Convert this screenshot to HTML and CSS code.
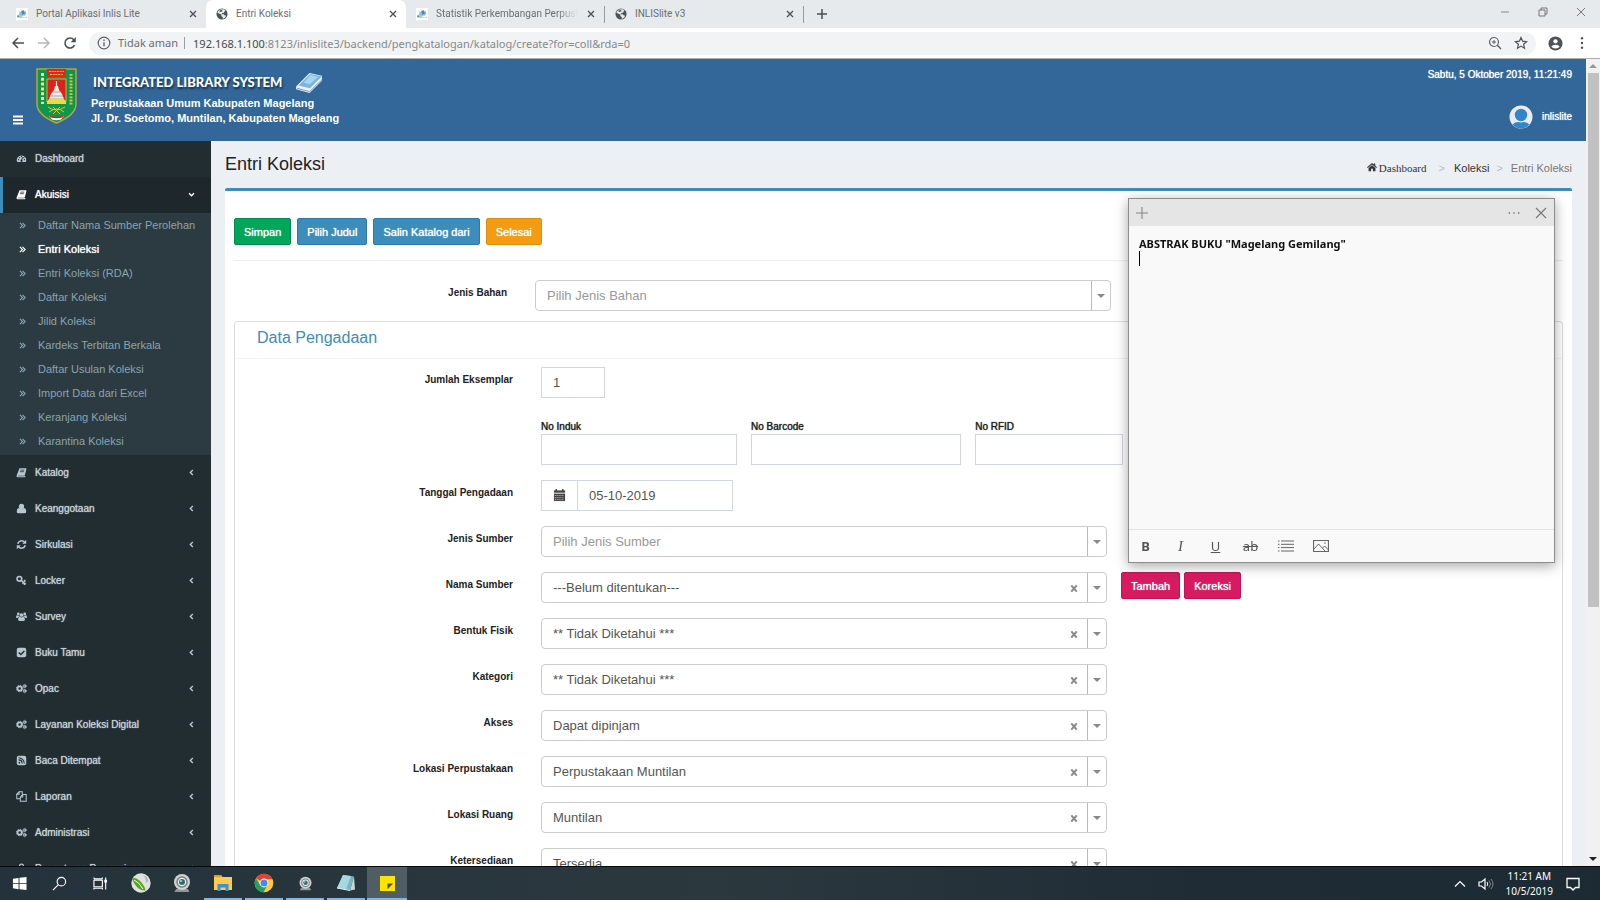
FILE: index.html
```html
<!DOCTYPE html>
<html lang="id">
<head>
<meta charset="utf-8">
<title>Entri Koleksi</title>
<link rel="stylesheet" href="styles.css">
</head>
<body>
<svg class="defs" aria-hidden="true">
  <symbol id="globe" viewBox="0 0 14 14"><circle cx="7" cy="7" r="6.500" fill="#4d5257"/><path d="M7.200 1.500c1.600 0 3 .6 3.900 1.600l-1.300.9-.3 1.500-2.200.4-.6 1.500h2.300l1 1.200 1.700.3c-.5 1.900-2 3.300-4 3.700l.3-1.700-1.800-1.500.2-1.800-2.300-.9L1.600 5.500C2.200 3.200 4.400 1.500 7.200 1.500z" fill="#e8ebed"/><path d="M4 2.800l2.500-.6 1.300 1.100-1.900 1.500-1.700-.3z" fill="#4d5257"/></symbol>
  <symbol id="portal" viewBox="0 0 14 14"><path fill="#fff" d="M0 0h14v14H0z"/><path d="M3 7l1 2h6l2-2-1-4-2 2-1-2-2 2-2-1v3z" fill="#8dbbdc"/><path d="M6 3.500l3-1 1.500 3.500-3 2z" fill="#4d86c0"/><path d="M2 10q3-2 5.500 0t5.500 0v1.500H2z" fill="#9cc9dd"/><path d="M1.500 8.500h2v2h-2z" fill="#6d8b5c"/></symbol>
  <symbol id="cross" viewBox="0 0 10 10"><path d="M2 2l6 6M8 2L2 8" stroke="currentColor" stroke-width="1.300" fill="none"/></symbol>
  <symbol id="wipe" viewBox="0 0 10 10"><path d="M2 1.500l6 7M8 1.500l-6 7" stroke="currentColor" stroke-width="2.200" fill="none"/></symbol>
  <symbol id="gauge" viewBox="0 0 14 14"><path d="M1.500 11.500A6 6 0 1 1 12.500 11.500z" fill="currentColor"/><path d="M7 10l1.300-4.500" stroke="#222d32" stroke-width="1.200"/><circle cx="7" cy="10" r="1.400" fill="#222d32"/><g fill="#222d32"><circle cx="3.300" cy="8.500" r=".8"/><circle cx="4.300" cy="5.800" r=".8"/><circle cx="7" cy="4.400" r=".8"/><circle cx="10.700" cy="8.500" r=".8"/><circle cx="10" cy="5.800" r=".8"/></g></symbol>
  <symbol id="book" viewBox="0 0 14 14"><path d="M4.500 1.500h8q1 .2.800 1.200l-2 7.500q-.2.800-1 .8H3q-1 .2-.5.900h8.300l.4-.4h1q-.3 1.500-1.400 1.500H2.300Q.4 12.900.7 11z" fill="currentColor"/><path d="M5.600 4h5M5 6h5" stroke="#222d32" stroke-width="1"/></symbol>
  <symbol id="user" viewBox="0 0 14 14"><circle cx="7" cy="4.300" r="3.300" fill="currentColor"/><path d="M1 11q0-4.500 3-4.700 3 2 6 0 3 .2 3 4.700 0 2-2 2H3q-2 0-2-2z" fill="currentColor"/></symbol>
  <symbol id="refresh" viewBox="0 0 14 14"><path d="M2.200 6A5 5 0 0 1 10.800 4M11.800 8A5 5 0 0 1 3.200 10" fill="none" stroke="currentColor" stroke-width="2"/><path d="M13 1v5H8zM1 13V8h5z" fill="currentColor"/></symbol>
  <symbol id="key" viewBox="0 0 14 14"><circle cx="4.300" cy="4.800" r="3" fill="none" stroke="currentColor" stroke-width="2"/><path d="M6.500 6.800l6 5M9.500 9.500L8.200 11M11.500 11l-1.300 1.600" stroke="currentColor" stroke-width="1.900"/><circle cx="11" cy="7.500" r="1.300" fill="currentColor"/></symbol>
  <symbol id="group" viewBox="0 0 16 14"><g fill="currentColor"><circle cx="3.300" cy="3.300" r="2"/><circle cx="12.700" cy="3.300" r="2"/><circle cx="8" cy="4.800" r="2.700"/><path d="M0 8q0-2.800 1.500-2.800 1.800 1 3.200.3Q5 7 5.700 7.400H4L2.500 9Q0 9.500 0 8zM16 8q0-2.800-1.500-2.800-1.800 1-3.200.3-.3 1.500-1 1.900H12L13.500 9Q16 9.500 16 8z"/><path d="M3 11.500Q3 7.500 5.500 7.500q2.500 1.500 5 0Q13 7.500 13 11.500q0 2-2 2H5q-2 0-2-2z"/></g></symbol>
  <symbol id="check" viewBox="0 0 14 14"><rect x="1" y="1" width="12" height="12" rx="2.500" fill="currentColor"/><path d="M3.500 7l2.700 2.600L10.700 5" stroke="#222d32" stroke-width="1.900" fill="none"/></symbol>
  <symbol id="gears" viewBox="0 0 16 14"><circle cx="5.300" cy="7" r="3.200" fill="none" stroke="currentColor" stroke-width="2.600"/><circle cx="5.300" cy="7" r="4.700" fill="none" stroke="currentColor" stroke-width="1.300" stroke-dasharray="1.900 1.790"/><g fill="none" stroke="currentColor"><circle cx="12.700" cy="3.400" r="1.600" stroke-width="1.500"/><circle cx="12.700" cy="10.600" r="1.600" stroke-width="1.500"/><circle cx="12.700" cy="3.400" r="2.600" stroke-dasharray="1.300 1.400"/><circle cx="12.700" cy="10.600" r="2.600" stroke-dasharray="1.300 1.400"/></g></symbol>
  <symbol id="rss" viewBox="0 0 14 14"><rect x="1" y="1" width="12" height="12" rx="2.500" fill="currentColor"/><circle cx="4.300" cy="9.800" r="1.100" fill="#222d32"/><path d="M3.300 6.200a4.500 4.500 0 0 1 4.500 4.500M3.300 3.500a7.200 7.200 0 0 1 7.200 7.200" stroke="#222d32" stroke-width="1.300" fill="none"/></symbol>
  <symbol id="copy" viewBox="0 0 14 14"><path d="M4 1h4v3.500M1 4l3-3v3zM1 4v6h4.500M8.500 4.500H13V13H5.500V7.500zM8.500 4.500v3h-3" fill="none" stroke="currentColor" stroke-width="1.300"/></symbol>
  <symbol id="lock" viewBox="0 0 14 14"><path d="M4.500 7V4a2.500 2.500 0 0 1 5 0v3" fill="none" stroke="currentColor" stroke-width="1.600"/><rect x="2.500" y="6.500" width="9" height="6.500" rx="1" fill="currentColor"/></symbol>
  <symbol id="raquo" viewBox="0 0 8 8"><path d="M1 1l3 3-3 3M4 1l3 3-3 3" fill="none" stroke="currentColor" stroke-width="1.300"/></symbol>
  <symbol id="left" viewBox="0 0 8 8"><path d="M5.500 1.200L2.700 4l2.800 2.800" fill="none" stroke="currentColor" stroke-width="1.600"/></symbol>
  <symbol id="down" viewBox="0 0 8 8"><path d="M1.200 2.500L4 5.300l2.800-2.800" fill="none" stroke="currentColor" stroke-width="1.600"/></symbol>
  <symbol id="cam" viewBox="0 0 18 20"><path d="M3 16h12l1.500 3h-15z" fill="#8f9697"/><circle cx="9" cy="9" r="8" fill="#cfd3d3"/><circle cx="9" cy="9" r="5" fill="#f0f1f1" stroke="#777e7f" stroke-width="1.500"/><circle cx="9" cy="9" r="3" fill="#2d6d70"/><circle cx="8" cy="8" r="1" fill="#b8dcdc"/></symbol>
</svg>

<header class="chrome">
  <div class="tabstrip">
    <div class="tab"><svg class="fav"><use href="#portal"/></svg><span class="tab-name">Portal Aplikasi Inlis Lite</span><button class="tab-close" aria-label="Tutup tab"><svg><use href="#cross"/></svg></button></div>
    <div class="tab active"><svg class="fav"><use href="#globe"/></svg><span class="tab-name">Entri Koleksi</span><button class="tab-close" aria-label="Tutup tab"><svg><use href="#cross"/></svg></button></div>
    <div class="tab divided"><svg class="fav"><use href="#portal"/></svg><span class="tab-name fade">Statistik Perkembangan Perpustakaan</span><button class="tab-close" aria-label="Tutup tab"><svg><use href="#cross"/></svg></button></div>
    <div class="tab divided"><svg class="fav"><use href="#globe"/></svg><span class="tab-name">INLISlite v3</span><button class="tab-close" aria-label="Tutup tab"><svg><use href="#cross"/></svg></button></div>
    <button class="new-tab" aria-label="Tab baru"><svg viewBox="0 0 12 12"><path d="M6 1v10M1 6h10" stroke="#4a4e52" stroke-width="1.500"/></svg></button>
    <div class="window-buttons">
      <button aria-label="Minimalkan"><svg viewBox="0 0 10 10"><path d="M1 5h8" stroke="#888"/></svg></button>
      <button aria-label="Pulihkan"><svg viewBox="0 0 10 10"><path d="M1 3h6v6H1zM3 3V1h6v6H7" fill="none" stroke="#777"/></svg></button>
      <button aria-label="Tutup"><svg viewBox="0 0 10 10"><path d="M1 1l8 8M9 1L1 9" stroke="#777"/></svg></button>
    </div>
  </div>
  <div class="toolbar">
    <button aria-label="Kembali"><svg viewBox="0 0 14 14"><path d="M13 7H2M7 2L2 7l5 5" fill="none" stroke="#4a4e52" stroke-width="1.500"/></svg></button>
    <button aria-label="Maju"><svg viewBox="0 0 14 14"><path d="M1 7h11M7 2l5 5-5 5" fill="none" stroke="#b5b8bb" stroke-width="1.500"/></svg></button>
    <button aria-label="Muat ulang"><svg viewBox="0 0 14 14"><path d="M11.500 9.200A5 5 0 1 1 10.700 3.700" fill="none" stroke="#4a4e52" stroke-width="1.600"/><path d="M12.800 1v5.200H7.600z" fill="#4a4e52"/></svg></button>
    <div class="omnibox">
      <svg class="info" viewBox="0 0 14 14"><circle cx="7" cy="7" r="5.800" fill="none" stroke="#5f6368" stroke-width="1.200"/><path d="M7 6.200v4M7 3.600v1.500" stroke="#5f6368" stroke-width="1.400"/></svg>
      <span class="insecure">Tidak aman</span>
      <span class="url"><span class="host">192.168.1.100</span>:8123/inlislite3/backend/pengkatalogan/katalog/create?for=coll&amp;rda=0</span>
      <button aria-label="Perbesar"><svg viewBox="0 0 14 14"><circle cx="6" cy="6" r="4.500" fill="none" stroke="#5f6368" stroke-width="1.200"/><path d="M9.300 9.300L13 13" stroke="#5f6368" stroke-width="1.500"/><path d="M6 4v4M4 6h4" stroke="#5f6368"/></svg></button>
      <button aria-label="Tandai"><svg viewBox="0 0 14 14"><path d="M7 1.500l1.600 3.700 4 .4-3 2.700.9 3.900L7 10.100l-3.500 2.100.9-3.900-3-2.700 4-.4z" fill="none" stroke="#4f5358" stroke-width="1.200"/></svg></button>
    </div>
    <button aria-label="Profil"><svg viewBox="0 0 16 16"><circle cx="8" cy="8" r="7.500" fill="#4f5358"/><circle cx="8" cy="5.700" r="2.300" fill="#fff"/><path d="M3.500 11.500Q4.500 9.300 8 9.300t4.500 2.200Q11 13.300 8 13.300t-4.500-1.800z" fill="#fff"/></svg></button>
    <button aria-label="Menu"><svg viewBox="0 0 14 14"><g fill="#4f5358"><circle cx="7" cy="2.300" r="1.200"/><circle cx="7" cy="7" r="1.200"/><circle cx="7" cy="11.700" r="1.200"/></g></svg></button>
  </div>
</header>

<div class="viewport">
  <div class="page">
    <header class="masthead">
      <button class="burger" aria-label="Menu samping"><svg viewBox="0 0 10 10"><path d="M0 1.500h10M0 5h10M0 8.500h10" stroke="#fff" stroke-width="2"/></svg></button>
      <svg class="crest" viewBox="0 0 41 56"><path d="M1 1h39v35Q40 47 20.500 55 1 47 1 36z" fill="#12944b" stroke="#b8a53a" stroke-width="1.500"/><path d="M11 1h19v8H11z" fill="#e1251f"/><path d="M13 3.500h15M14 6.500h13" stroke="#f1c22e" stroke-dasharray="2 .7"/><path d="M11 11h19v23H11z" fill="#df211d" stroke="#c9b32e"/><path d="M20.500 13v5" stroke="#ecebe4" stroke-width="1.200"/><path d="M19 18h3l1 4 3 4 2 5 1 2H12l1-2 2-5 3-4z" fill="#ecebe4"/><path d="M14 28h13M13 31h15M17 24h7" stroke="#8c8c84" stroke-width=".7"/><path d="M11 33q9.500-4 19 0v3H11z" fill="#f2dc2b"/><path d="M6.500 5v31" stroke="#f3ec83" stroke-width="3" stroke-dasharray="3 1.800"/><path d="M35 6v31" stroke="#d0c93b" stroke-width="3" stroke-dasharray="1.800 1.400"/><path d="M12 39q8 6 17 0M13 44q8-6 15 0M17 39l7 7M24 39l-7 7" fill="none" stroke="#cfca36" stroke-width="1"/><path d="M13 48q7.500 2.500 15 0l-3 3.500q-4.500 1.500-9 0z" fill="#fff"/><path d="M14 48.500q7 2 13 0" fill="none" stroke="#d4231f" stroke-width="1.500"/></svg>
      <div class="brand">
        <div class="brand-line"><span class="brand-name">INTEGRATED LIBRARY SYSTEM</span><svg class="brand-book" viewBox="0 0 30 24"><path d="M1 15L15 1l13 3v5L15 22 1 18z" fill="#e9f1f7"/><path d="M3.500 14L15.500 2 28 4.500 15.500 17z" fill="#78b5e1"/><path d="M9 11l7-8 8 2-9 8z" fill="#a5d5f2"/><path d="M2 17l13 3.500L28 8" fill="none" stroke="#8295a8"/></svg></div>
        <div class="brand-sub">Perpustakaan Umum Kabupaten Magelang</div>
        <div class="brand-sub">Jl. Dr. Soetomo, Muntilan, Kabupaten Magelang</div>
      </div>
      <div class="account">
        <time>Sabtu, 5 Oktober 2019, 11:21:49</time>
        <a class="user" href="#"><svg viewBox="0 0 24 24"><circle cx="12" cy="12" r="11.500" fill="#e9ebee"/><circle cx="12" cy="10" r="6.200" fill="#2f86c9"/><path d="M3.500 19.500Q7 16 12 17.500q5-1.500 8.500 2Q17 23.500 12 23.500t-8.500-4z" fill="#2f86c9"/></svg>inlislite</a>
      </div>
    </header>

    <div class="columns">
      <nav class="sidebar">
        <a class="item" href="#"><svg><use href="#gauge"/></svg><span>Dashboard</span></a>
        <a class="item open" href="#"><svg><use href="#book"/></svg><span>Akuisisi</span><svg class="chev"><use href="#down"/></svg></a>
        <div class="submenu">
          <a href="#"><svg><use href="#raquo"/></svg>Daftar Nama Sumber Perolehan</a>
          <a href="#" class="current"><svg><use href="#raquo"/></svg>Entri Koleksi</a>
          <a href="#"><svg><use href="#raquo"/></svg>Entri Koleksi (RDA)</a>
          <a href="#"><svg><use href="#raquo"/></svg>Daftar Koleksi</a>
          <a href="#"><svg><use href="#raquo"/></svg>Jilid Koleksi</a>
          <a href="#"><svg><use href="#raquo"/></svg>Kardeks Terbitan Berkala</a>
          <a href="#"><svg><use href="#raquo"/></svg>Daftar Usulan Koleksi</a>
          <a href="#"><svg><use href="#raquo"/></svg>Import Data dari Excel</a>
          <a href="#"><svg><use href="#raquo"/></svg>Keranjang Koleksi</a>
          <a href="#"><svg><use href="#raquo"/></svg>Karantina Koleksi</a>
        </div>
        <a class="item" href="#"><svg><use href="#book"/></svg><span>Katalog</span><svg class="chev"><use href="#left"/></svg></a>
        <a class="item" href="#"><svg><use href="#user"/></svg><span>Keanggotaan</span><svg class="chev"><use href="#left"/></svg></a>
        <a class="item" href="#"><svg><use href="#refresh"/></svg><span>Sirkulasi</span><svg class="chev"><use href="#left"/></svg></a>
        <a class="item" href="#"><svg><use href="#key"/></svg><span>Locker</span><svg class="chev"><use href="#left"/></svg></a>
        <a class="item" href="#"><svg><use href="#group"/></svg><span>Survey</span><svg class="chev"><use href="#left"/></svg></a>
        <a class="item" href="#"><svg><use href="#check"/></svg><span>Buku Tamu</span><svg class="chev"><use href="#left"/></svg></a>
        <a class="item" href="#"><svg><use href="#gears"/></svg><span>Opac</span><svg class="chev"><use href="#left"/></svg></a>
        <a class="item" href="#"><svg><use href="#gears"/></svg><span>Layanan Koleksi Digital</span><svg class="chev"><use href="#left"/></svg></a>
        <a class="item" href="#"><svg><use href="#rss"/></svg><span>Baca Ditempat</span><svg class="chev"><use href="#left"/></svg></a>
        <a class="item" href="#"><svg><use href="#copy"/></svg><span>Laporan</span><svg class="chev"><use href="#left"/></svg></a>
        <a class="item" href="#"><svg><use href="#gears"/></svg><span>Administrasi</span><svg class="chev"><use href="#left"/></svg></a>
        <a class="item" href="#"><svg><use href="#lock"/></svg><span>Pengaturan Pengunjung</span><svg class="chev"><use href="#left"/></svg></a>
      </nav>

      <main class="content">
        <div class="heading">
          <h1>Entri Koleksi</h1>
          <nav class="crumbs">
            <a class="home" href="#"><svg viewBox="0 0 14 14"><path d="M0 7.500L7 1.500l2.500 2.100V2h2v3.300L14 7.500l-1 1L7 3.500l-6 5zM2.200 8.500L7 4.600l4.800 3.900V13H8.300V9.500H5.700V13H2.200z" fill="currentColor"/></svg>Dashboard</a>
            <span class="sep">&gt;</span><a href="#">Koleksi</a><span class="sep">&gt;</span><span class="here">Entri Koleksi</span>
          </nav>
        </div>
        <form class="box">
          <div class="actions">
            <button type="button" class="btn green">Simpan</button>
            <button type="button" class="btn blue">Pilih Judul</button>
            <button type="button" class="btn blue">Salin Katalog dari</button>
            <button type="button" class="btn orange">Selesai</button>
          </div>
          <div class="material">
            <label for="bahan">Jenis Bahan</label>
            <div class="combo empty"><select id="bahan"><option>Pilih Jenis Bahan</option></select><span class="arrow"></span></div>
          </div>
          <section class="panel">
            <h2>Data Pengadaan</h2>
            <div class="rows">
              <div class="row"><label for="jumlah">Jumlah Eksemplar</label><input id="jumlah" class="count" type="text" value="1"></div>
              <div class="row numbers">
                <div class="trio">
                  <div class="stack"><label for="induk">No Induk</label><input id="induk" type="text"></div>
                  <div class="stack"><label for="barcode">No Barcode</label><input id="barcode" type="text"></div>
                  <div class="stack"><label for="rfid">No RFID</label><input id="rfid" type="text"></div>
                </div>
              </div>
              <div class="row"><label for="tanggal">Tanggal Pengadaan</label><div class="date"><svg viewBox="0 0 14 14"><path d="M1 1.500h12V13H1z" fill="#444"/><path d="M3.500 0v3M10.500 0v3" stroke="#444" stroke-width="1.600"/><path d="M1 4.500h12" stroke="#fff"/><path d="M2 7h10M2 9.300h10M2 11.500h10" stroke="#bbb" stroke-width="1" stroke-dasharray="1.200 .8"/></svg><input id="tanggal" type="text" value="05-10-2019"></div></div>
              <div class="row"><label for="jsumber">Jenis Sumber</label><div class="combo empty"><select id="jsumber"><option>Pilih Jenis Sumber</option></select><span class="arrow"></span></div></div>
              <div class="row"><label for="nsumber">Nama Sumber</label><div class="combo"><select id="nsumber"><option>---Belum ditentukan---</option></select><button type="button" class="clear" aria-label="Hapus"><svg><use href="#wipe"/></svg></button><span class="arrow"></span></div><div class="extra"><button type="button" class="btn pink">Tambah</button><button type="button" class="btn pink">Koreksi</button></div></div>
              <div class="row"><label for="bentuk">Bentuk Fisik</label><div class="combo"><select id="bentuk"><option>** Tidak Diketahui ***</option></select><button type="button" class="clear" aria-label="Hapus"><svg><use href="#wipe"/></svg></button><span class="arrow"></span></div></div>
              <div class="row"><label for="kategori">Kategori</label><div class="combo"><select id="kategori"><option>** Tidak Diketahui ***</option></select><button type="button" class="clear" aria-label="Hapus"><svg><use href="#wipe"/></svg></button><span class="arrow"></span></div></div>
              <div class="row"><label for="akses">Akses</label><div class="combo"><select id="akses"><option>Dapat dipinjam</option></select><button type="button" class="clear" aria-label="Hapus"><svg><use href="#wipe"/></svg></button><span class="arrow"></span></div></div>
              <div class="row"><label for="perpus">Lokasi Perpustakaan</label><div class="combo"><select id="perpus"><option>Perpustakaan Muntilan</option></select><button type="button" class="clear" aria-label="Hapus"><svg><use href="#wipe"/></svg></button><span class="arrow"></span></div></div>
              <div class="row"><label for="ruang">Lokasi Ruang</label><div class="combo"><select id="ruang"><option>Muntilan</option></select><button type="button" class="clear" aria-label="Hapus"><svg><use href="#wipe"/></svg></button><span class="arrow"></span></div></div>
              <div class="row"><label for="sedia">Ketersediaan</label><div class="combo"><select id="sedia"><option>Tersedia</option></select><button type="button" class="clear" aria-label="Hapus"><svg><use href="#wipe"/></svg></button><span class="arrow"></span></div></div>
            </div>
          </section>
        </form>
      </main>
    </div>
  </div>
  <div class="scrollbar" aria-hidden="true"><i class="up"></i><i class="thumb"></i><i class="dn"></i></div>
</div>

<aside class="note">
  <div class="note-head">
    <button aria-label="Catatan baru"><svg viewBox="0 0 14 14"><path d="M7 1v12M1 7h12" stroke="#888" stroke-width="1.100"/></svg></button>
    <button class="more" aria-label="Menu catatan"><svg viewBox="0 0 14 14"><g fill="#555"><circle cx="1.500" cy="7" r=".9"/><circle cx="7" cy="7" r=".9"/><circle cx="12.500" cy="7" r=".9"/></g></svg></button>
    <button aria-label="Tutup catatan"><svg viewBox="0 0 14 14"><path d="M2 2l10 10M12 2L2 12" stroke="#777" stroke-width="1.100"/></svg></button>
  </div>
  <div class="note-text"><p>ABSTRAK BUKU "Magelang Gemilang"</p><i class="caret"></i></div>
  <div class="note-tools">
    <button><b>B</b></button><button><i>I</i></button><button><u>U</u></button><button><s>ab</s></button>
    <button aria-label="Daftar"><svg viewBox="0 0 16 14"><path d="M3 2h13M3 5.300h13M3 8.600h13M3 12h13M0 2h1.500M0 5.300h1.500M0 8.600h1.500M0 12h1.500" stroke="#666"/></svg></button>
    <button aria-label="Gambar"><svg viewBox="0 0 16 14"><path d="M.5 1.500h15v11H.5z" fill="none" stroke="#666" stroke-width="1.200"/><path d="M1 10l4.500-5 7 7.500M9.500 9l2-2 4 4" fill="none" stroke="#666"/><circle cx="12" cy="4" r=".8" fill="#666"/></svg></button>
  </div>
</aside>

<footer class="taskbar">
  <button aria-label="Mulai"><svg viewBox="0 0 16 16"><path d="M1 3l6-1v5.600H1zM8 1.900L15.500 1v6.600H8zM1 8.500h6V14l-6-.9zM8 8.500h7.500V15L8 14.100z" fill="#fff"/></svg></button>
  <button aria-label="Cari"><svg viewBox="0 0 16 16"><circle cx="10" cy="6" r="4.500" fill="none" stroke="#fff" stroke-width="1.200"/><path d="M6.800 9.200L1 15" stroke="#fff" stroke-width="1.200"/></svg></button>
  <button aria-label="Tampilan tugas"><svg viewBox="0 0 16 16"><path d="M1 4.500h9v7H1zM1 3V1.500M10 3V1.500M1 3h9M1 14.500V13h9v1.500M13.500 1.500v13" fill="none" stroke="#fff" stroke-width="1.200"/><path d="M12 4h3v3h-3z" fill="#fff"/></svg></button>
  <button aria-label="CorelDRAW"><svg class="large" viewBox="0 0 20 20"><circle cx="10" cy="10" r="9.700" fill="#dfe2de"/><path d="M1 6Q4 3 9 8t5.500 9.500Q6 18 1 6z" fill="#58a31d"/><path d="M3 7q5 2 9 9" stroke="#fff" fill="none"/><path d="M12 2q4 1 5.500 6l-2.500 2q0-5-3-8z" fill="#b3b8b4"/></svg></button>
  <button aria-label="Kamera"><svg class="large"><use href="#cam"/></svg></button>
  <button class="running" aria-label="File Explorer"><svg class="large" viewBox="0 0 20 20"><path d="M1 2h7l1.500 2H19v13H1z" fill="#fccb4f"/><path d="M1 2h7l1 2H1z" fill="#e79b1a"/><path d="M4.500 18v-7h11v7h-3v-3.500h-5V18z" fill="#3b93d8"/></svg></button>
  <button class="running" aria-label="Chrome"><svg class="large" viewBox="0 0 20 20"><circle cx="10" cy="10" r="9.300" fill="#fccc3d"/><path d="M10 10L2 5.300A9.300 9.300 0 0 1 18.500 6.200H10z" fill="#df4437"/><path d="M10 10L6.300 12.300 2 5.300a9.300 9.300 0 0 0 7.600 14L13.500 12z" fill="#1ea362"/><circle cx="10" cy="10" r="4.400" fill="#fff"/><circle cx="10" cy="10" r="3.500" fill="#4588f1"/></svg></button>
  <button class="running" aria-label="Kamera"><svg><use href="#cam"/></svg></button>
  <button class="running" aria-label="Notepad"><svg class="large" viewBox="0 0 20 20"><path d="M7 2l11 1.500-4 14L1 15z" fill="#75b7c6"/><path d="M7 2l8 1-5 13.500L1 15z" fill="#a8d7de"/><path d="M18 3.500l1 13-5 1z" fill="#cfd5d4"/><path d="M1 15l13 2.500" stroke="#e4eeee"/></svg></button>
  <button class="running focused" aria-label="Sticky Notes"><svg viewBox="0 0 16 16"><path d="M0 0h16v16H0z" fill="#ffe400"/><path d="M8 8h6l-6 6z" fill="#4c5256"/></svg></button>
  <div class="tray">
    <svg viewBox="0 0 12 12"><path d="M1 8.500l5-5 5 5" fill="none" stroke="#fff" stroke-width="1.200"/></svg>
    <svg class="speaker" viewBox="0 0 16 14"><path d="M1 5h2.500L7 2v10L3.500 9H1z" fill="none" stroke="#fff" stroke-width="1.200"/><path d="M9 5q1.500 2 0 4" fill="none" stroke="#fff"/><path d="M11 3.500q3 3.500 0 7M13 2q4 5 0 10" fill="none" stroke="#7d888d"/></svg>
    <div class="clock"><span>11:21 AM</span><span>10/5/2019</span></div>
    <svg class="notify" viewBox="0 0 14 14"><path d="M1 1.500h12v9H9.500L7 13l-2.500-2.500H1z" fill="none" stroke="#fff" stroke-width="1.300"/></svg>
  </div>
</footer>
</body>
</html>
```
FILE: styles.css
```css
* { box-sizing: border-box; }
body { margin: 0; height: 100vh; display: flex; flex-direction: column; overflow: hidden; font-family: "Liberation Sans", Arial, sans-serif; font-size: 11px; color: #222; }
button { border: 0; padding: 0; background: none; font: inherit; color: inherit; display: flex; align-items: center; justify-content: center; }
a { color: inherit; text-decoration: none; }
svg { display: block; flex: none; }
.defs { display: none; }

/* Browser frame */
.chrome { flex: none; font-family: "Noto Sans", "Open Sans", sans-serif; font-size: 10px; color: #6a6e73; }
.tabstrip { height: 28px; display: flex; align-items: center; background: #e6eaed; padding-left: 6px; }
.tab { width: 200px; height: 28px; display: flex; align-items: center; padding: 0 8px 0 10px; gap: 8px; font-family: Roboto, sans-serif; }
.tab.active { background: #fff; border-radius: 7px 7px 0 0; }
.tab.divided { width: 199px; border-right: 1px solid #989b9e; height: 17px; }
.fav { width: 12px; height: 12px; }
.tab-name { flex: 1; overflow: hidden; white-space: nowrap; line-height: 16px; }
.fade { mask-image: linear-gradient(90deg, #000 85%, transparent); }
.tab-close svg { width: 10px; height: 10px; color: #4a4e52; }
.new-tab { margin-left: 12px; }
.new-tab svg { width: 12px; height: 12px; }
.window-buttons { margin-left: auto; display: flex; gap: 28px; padding: 0 14px 4px 0; }
.window-buttons svg { width: 10px; height: 10px; }
.toolbar { height: 31px; display: flex; align-items: center; background: #fff; border-bottom: 1px solid #a9adb0; padding: 0 11px; gap: 12px; }
.toolbar svg { width: 14px; height: 14px; }
.toolbar > button:nth-last-child(2) svg { width: 15px; height: 15px; }
.omnibox { flex: 1; height: 23px; display: flex; align-items: center; border-radius: 12px; background: #f1f3f4; padding: 0 8px; gap: 12px; font-size: 11px; }
.omnibox .info { margin-right: -5px; }
.insecure { border-right: 1px solid #9a9da0; padding-right: 6px; line-height: 12px; }
.url { flex: 1; margin-left: -4px; color: #85898d; }
.host { color: #45494d; }

/* Application */
.viewport { flex: 1; min-height: 0; display: flex; }
.page { flex: 1; min-width: 0; display: flex; flex-direction: column; overflow: hidden; }
.masthead { flex: none; height: 82px; display: flex; background: #336799; color: #fff; padding: 9px 14px 0 13px; }
.burger { align-self: flex-end; margin: 0 13px 16px 0; }
.burger svg { width: 10px; height: 10px; }
.crest { width: 41px; height: 56px; }
.brand { margin-left: 14px; padding-top: 2px; }
.brand-line { display: flex; align-items: center; gap: 13px; height: 26px; }
.brand-name { font: 900 13px Lato, sans-serif; text-shadow: 1px 2px 2px #14304d; padding: 0 0 2px 2px; }
.brand-book { width: 29px; height: 23px; }
.brand-sub { line-height: 15px; font-weight: bold; }
.account { margin-left: auto; display: flex; flex-direction: column; align-items: flex-end; justify-content: space-between; font-size: 10px; line-height: 14px; padding-bottom: 12px; text-shadow: 0 0 1px currentColor; }
.user { display: flex; align-items: center; gap: 9px; }
.user svg { width: 24px; height: 24px; }
.columns { flex: 1; min-height: 0; display: flex; background: #ecf0f5; }
.sidebar { flex: none; width: 211px; overflow: hidden; background: #222d32; color: #b8c7ce; }
.item { display: flex; align-items: center; height: 36px; padding: 0 16px 2px; gap: 8px; font-size: 10px; text-shadow: 0 0 1px currentColor; }
.item svg { width: 11px; height: 11px; }
.item span { flex: 1; color: #c6d2d8; }
.item .chev { width: 7px; height: 7px; }
.item.open { background: #1e282c; border-left: 3px solid #3c8dbc; padding-left: 13px; color: #fff; }
.item.open span { color: #fff; }
.submenu { background: #2c3b41; padding-bottom: 2px; color: #8aa4af; }
.submenu a { display: flex; align-items: center; gap: 12px; height: 24px; padding-left: 19px; }
.submenu svg { width: 7px; height: 7px; }
.submenu .current { color: #fff; text-shadow: 0 0 1px currentColor; }
.content { flex: 1; min-width: 0; display: flex; flex-direction: column; padding: 0 14px; }
.heading { flex: none; height: 47px; display: flex; justify-content: space-between; align-items: flex-start; padding-top: 12px; }
h1 { margin: 0; font-size: 18px; font-weight: normal; line-height: 22px; }
.crumbs { display: flex; align-items: center; line-height: 14px; padding-top: 8px; color: #333; }
.home { display: flex; gap: 2px; font-family: "Liberation Serif", serif; }
.home svg { width: 10px; height: 12px; }
.sep { color: #bbb; padding: 0 8px 0 7px; }
.home + .sep { padding: 0 9px 0 12px; }
.here { color: #777; }

/* Form */
.box { flex: 1; background: #fff; border-top: 3px solid #3c8dbc; border-radius: 2px 2px 0 0; padding: 27px 9px 0; }
.actions { display: flex; gap: 6px; padding-bottom: 15px; border-bottom: 1px solid #eee; }
.btn { height: 27px; padding: 0 9px; border: 1px solid; border-radius: 2px; color: #fff; text-shadow: 0 0 1px currentColor; }
.green { background: #00a65a; border-color: #008d4c; }
.blue { background: #3c8dbc; border-color: #2b7cab; }
.orange { background: #f39c12; border-color: #e08e0b; }
.pink { background: #d81b60; border-color: #cc1055; }
label { font-size: 10px; font-weight: bold; color: #222; }
.material { display: grid; grid-template-columns: 287fr 576fr 438fr; column-gap: 14px; padding: 19px 0 10px; }
.material label, .row > label { text-align: right; padding-right: 14px; line-height: 26px; }
.combo { height: 31px; display: flex; border: 1px solid #ccc; border-radius: 4px; background: #fff; overflow: hidden; }
.combo select { flex: 1; min-width: 0; appearance: none; border: 0; background: none; padding: 0 11px; font: 13px "Liberation Sans", Arial, sans-serif; color: #555; }
.combo.empty select { color: #999; }
.clear svg { width: 10px; height: 9px; color: #888; }
.clear { padding: 1px 8px 0 0; }
.arrow { width: 19px; border-left: 1px solid #bbb; display: flex; align-items: center; justify-content: center; }
.arrow::after { content: ""; border: 4px solid transparent; border-top-color: #888; border-bottom: 0; }
.panel { border: 1px solid #ddd; border-radius: 4px 4px 0 0; border-bottom: 0; }
h2 { margin: 0; padding: 0 22px; font-size: 16px; font-weight: normal; line-height: 32px; height: 37px; color: #3c8dbc; border-bottom: 1px solid #f4f4f4; }
.rows { display: flex; flex-direction: column; gap: 15px; padding-top: 8px; }
.row { display: grid; grid-template-columns: 292fr 566fr 441fr; column-gap: 14px; }
.row input { height: 31px; border: 1px solid #d2d6de; padding: 0 11px; font: 13px "Liberation Sans", Arial, sans-serif; color: #555; background: #fff; min-width: 0; }
.row .count { width: 64px; }
.trio { grid-column: 2 / 4; width: 57%; display: grid; grid-template-columns: 195fr 209fr 147fr; gap: 14px; }
.stack { min-width: 0; display: flex; flex-direction: column; padding-top: 6px; }
.stack label { line-height: 15px; font-weight: normal; text-shadow: 0 0 1px currentColor; }
.date { width: 192px; display: flex; }
.date svg { width: 36px; height: 31px; padding: 8px 10px; border: 1px solid #d2d6de; border-right: 0; }
.date input { flex: 1; }
.extra { display: flex; gap: 4px; }

/* Page scrollbar */
.scrollbar { width: 14px; background: #f1f1f1; display: flex; flex-direction: column; align-items: center; padding: 5px 0; }
.up { border: 4px solid transparent; border-bottom-color: #999; border-top: 0; }
.thumb { width: 11px; height: 67%; background: #c1c1c1; margin-top: 5px; }
.dn { margin-top: auto; border: 4px solid transparent; border-top-color: #222; border-bottom: 0; }

/* Sticky note window */
.note { position: fixed; top: 198px; right: 45px; width: 427px; height: 365px; display: flex; flex-direction: column; background: #f9f9f9; border: 1px solid #8d8d8d; box-shadow: 0 3px 12px rgba(0, 0, 0, .35); font-family: "Noto Sans", "Open Sans", sans-serif; color: #111; }
.note-head { height: 27px; display: flex; align-items: center; gap: 14px; padding: 0 6px; background: #e5e5e5; }
.note-head svg { width: 14px; height: 14px; }
.note-head .more { margin-left: auto; }
.note-head .more svg { width: 12px; }
.note-text { flex: 1; padding: 10px; font-weight: bold; }
.note-text p { margin: 0; line-height: 15px; }
.caret { display: block; width: 1px; height: 15px; background: #000; }
.note-tools { height: 33px; display: flex; align-items: center; border-top: 1px solid #e3e3e3; font-size: 13px; color: #555; }
.note-tools button { width: 35px; padding-right: 2px; }
.note-tools svg { width: 16px; height: 14px; }
.note-tools i { font-family: "Liberation Serif", serif; font-size: 15px; }

/* Desktop taskbar */
.taskbar { flex: none; height: 34px; display: flex; gap: 1px; background: linear-gradient(90deg, #24323b, #2b383e 45%, #1f2c36 75%, #1c2b33); border-top: 1px solid #080b0d; color: #fff; }
.taskbar button { width: 40px; border-bottom: 2px solid transparent; padding-top: 1px; }
.taskbar button:first-child { width: 38px; }
.taskbar .running { border-image: linear-gradient(90deg, transparent 3px, #76b9ed 3px, #76b9ed 37px, transparent 37px) 2; }
.taskbar .focused { background: #515d64; border-image: none; border-color: #76b9ed; }
.taskbar svg { width: 15px; height: 15px; }
.taskbar .large { width: 20px; height: 20px; }
.tray { margin-left: auto; display: flex; align-items: center; gap: 12px; padding-right: 20px; }
.tray svg { width: 12px; height: 12px; }
.tray .speaker { width: 16px; height: 14px; }
.tray .notify { width: 14px; height: 14px; margin-left: 1px; }
.clock { display: flex; flex-direction: column; align-items: center; font: 10px/15px "Noto Sans", sans-serif; }
```
